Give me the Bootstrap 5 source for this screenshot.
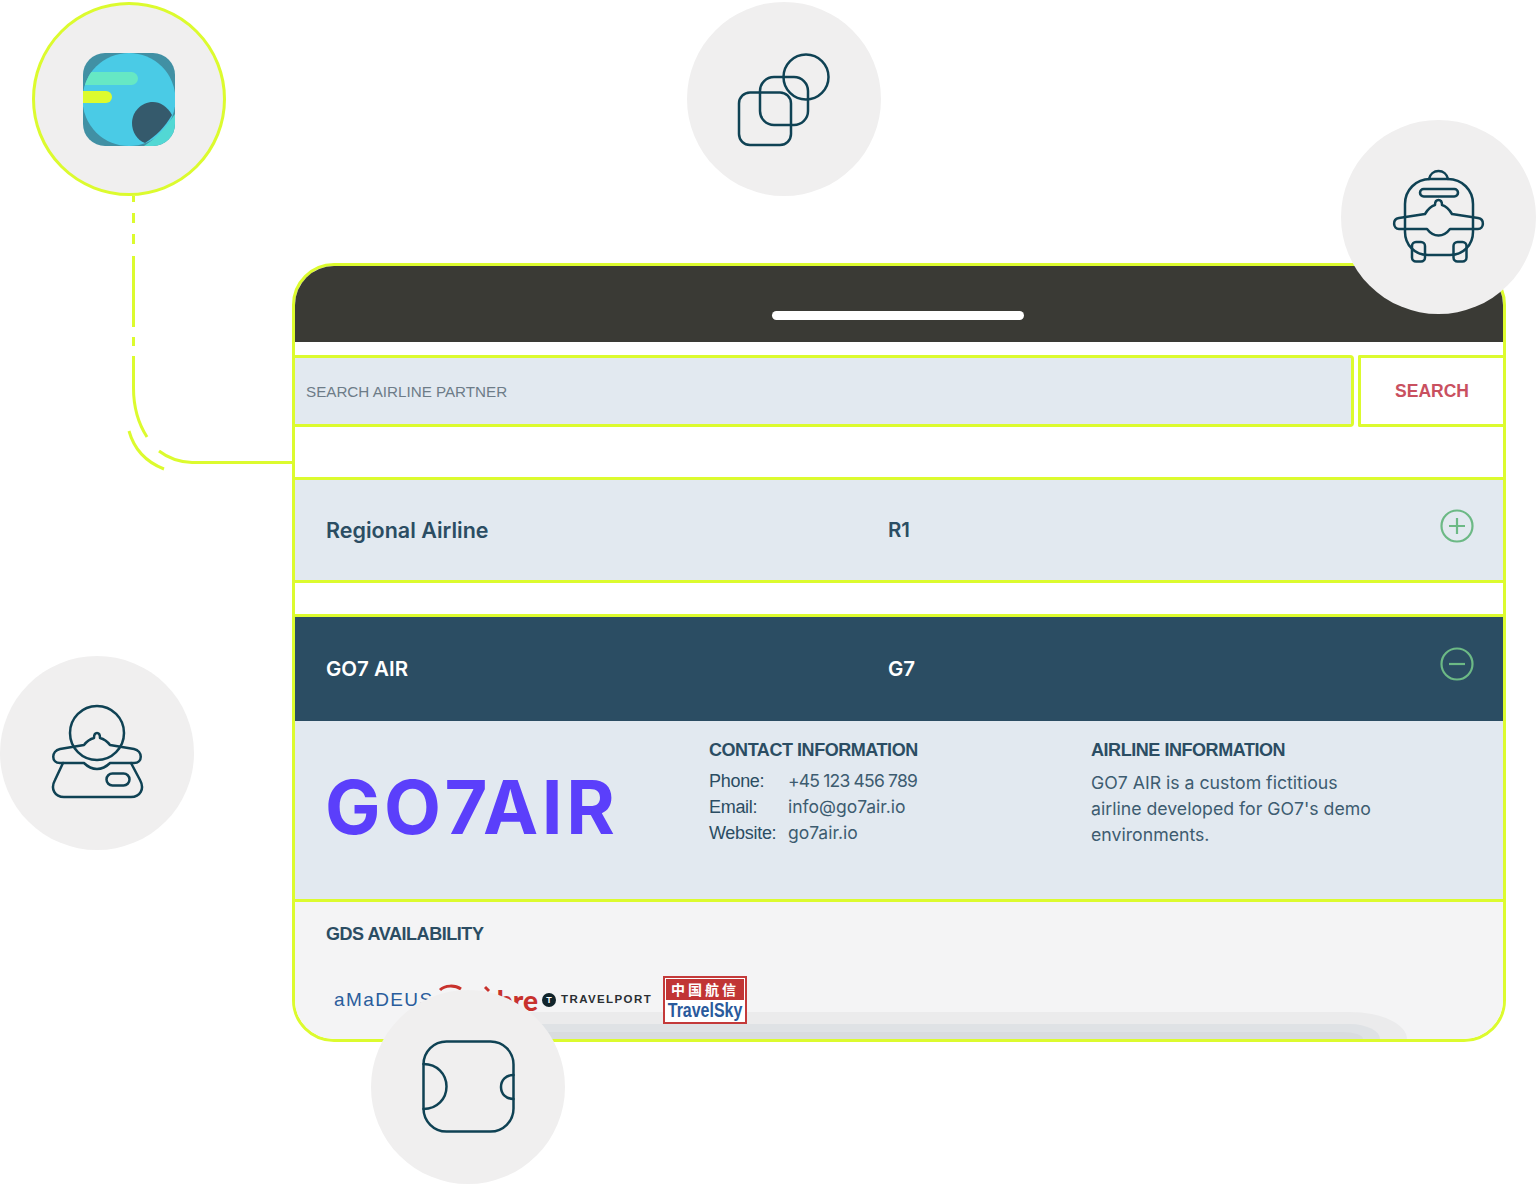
<!DOCTYPE html>
<html lang="en">
<head>
    <meta charset="UTF-8">
    <meta name="viewport" content="width=device-width, initial-scale=1.0">
    <title>GO7 airline partners</title>
    <link rel="stylesheet" href="https://cdn.jsdelivr.net/npm/bootstrap@5.3.0/dist/css/bootstrap.min.css">
    <style>
        body { background: #fff; font-family: "Liberation Sans", Arial, sans-serif; color: #2b4d63; }
        .stage { position: relative; width: 1536px; height: 1186px; overflow: hidden; padding: 263px 30px 0 292px; }
        .wire { position: absolute; left: 0; top: 0; }

        .panel-box { height: 779px; border: 3px solid #dcfb2e; border-radius: 42px; overflow: hidden; background: #fff; }
        .panel-top { height: 76px; background: #3a3a35; padding: 0 2px 22px 0; }
        .panel-grip { width: 252px; height: 9px; border-radius: 5px; background: #fff; }

        .search-line { height: 72px; margin-top: 13px; gap: 4px; }
        .search-field { height: 72px; background: #e2e9f0; border: 3px solid #dcfb2e; border-left: 0; border-radius: 0 4px 4px 0; padding: 0 0 0 11px; font-size: 15.200px; color: #6d7c88; }
        .search-field::placeholder { color: #6d7c88; }
        .search-btn { width: 145px; height: 72px; background: #fff; border: 3px solid #dcfb2e; border-right: 0; border-radius: 2px 0 0 2px; font-weight: 700; font-size: 17.500px; color: #c9505f; }

        .airline-row { background: #e2e9f0; border-top: 3px solid #dcfb2e; padding: 0 29px 0 31px; font-family: "Inter", sans-serif; font-weight: 600; }
        .airline-row.one { height: 106px; margin-top: 50px; border-bottom: 3px solid #dcfb2e; }
        .airline-row.two { height: 107px; margin-top: 31px; background: #2b4d63; color: #fff; }
        .row-name { width: 562px; font-size: 21.500px; }
        .airline-row.two .row-name { font-size: 20.500px; }
        .row-code { font-size: 20.500px; }
        .toggle-ico { margin-top: -9px; }
        .airline-row.two .toggle-ico { margin-top: -11px; }

        .detail-box { height: 181px; background: #e2e9f0; border-bottom: 3px solid #dcfb2e; padding: 18px 0 0 32px; }
        .logo-cell { width: 382px; padding-top: 26px; margin-left: -2px; margin-right: 2px; }
        .go7-logo { font-family: "Inter", sans-serif; font-weight: 700; font-size: 74px; line-height: 84px; letter-spacing: 3.500px; color: #5b3ffb; }
        .head-label { font-size: 18px; font-weight: 700; line-height: 22px; margin-bottom: 9px; letter-spacing: -.45px; }
        .contact-cell { width: 382px; font-size: 18px; line-height: 26px; }
        .contact-cell .head-label { margin-bottom: 7px; }
        .contact-cell dt { float: left; clear: left; width: 79px; font-weight: 400; letter-spacing: -.3px; }
        .contact-cell dd { margin: 0 0 0 79px; font-family: "Inter", sans-serif; font-size: 17.500px; color: #3d5c70; }
        .contact-cell dd.phone-no { letter-spacing: -.8px; }
        .about-cell { width: 285px; font-family: "Inter", sans-serif; font-size: 17.700px; line-height: 26px; color: #3d5c70; }
        .about-cell .head-label { font-family: "Liberation Sans", Arial, sans-serif; font-size: 18px; color: #2b4d63; }

        .gds-box { position: relative; height: 137px; background: #f4f4f5; padding: 21px 0 0 31px; }
        .gds-shade { position: absolute; left: 230px; right: 96px; bottom: 0; height: 27px; background: #ebebec; border-top-right-radius: 57px 27px; }
        .gds-shade.mid { right: 123px; height: 15px; background: #dfe2e5; border-top-right-radius: 30px 15px; }
        .gds-shade.low { right: 140px; height: 7px; background: #d9dcdf; border-top-right-radius: 20px 7px; }
        .gds-logos { position: relative; margin: 31px 0 0 8px; }
        .amadeus-name { width: 104px; font-size: 19px; letter-spacing: 1.400px; color: #2a5d9c; }
        .sabre-name { width: 100px; font-family: "Lato", sans-serif; font-weight: 900; font-size: 28px; color: #c8322d; line-height: 20px; text-align: right; }
        .sabre-arc { position: absolute; left: 103px; top: 8px; }
        .tp-name { font-size: 11.500px; font-weight: 700; letter-spacing: 1.400px; color: #2a2f33; }
        .tp-dot { width: 14px; height: 14px; border-radius: 50%; background: #11242b; color: #fff; font-size: 9px; font-weight: 700; line-height: 14px; text-align: center; margin: 0 5px 0 4px; }
        .sky-badge { width: 84px; height: 48px; margin-left: 11px; padding: 1px; border: 2px solid #c43a3a; background: #fff; text-align: center; overflow: hidden; }
        .sky-top { background: #c13535; color: #fff; font-family: "Noto Sans CJK SC", sans-serif; font-weight: 700; font-size: 14px; line-height: 21px; letter-spacing: 3px; }
        .sky-low { display: inline-block; margin: 0 -10px; font-weight: 700; font-size: 21px; line-height: 19px; color: #2a5a9c; white-space: nowrap; transform: scaleX(.76); }

        .node { position: absolute; width: 194px; height: 194px; border-radius: 50%; background: #f0efef; }
        .node svg { display: block; }
        .node.lime { border: 3px solid #dcfb2e; }
        .node-a { left: 32px; top: 2px; }
        .node-b { left: 687px; top: 2px; }
        .node-c { left: 1341px; top: 120px; width: 195px; }
        .node-d { left: 0; top: 656px; }
        .node-e { left: 371px; top: 990px; }
        .ln { fill: none; stroke: #0f4254; stroke-width: 2.500; stroke-linejoin: round; stroke-linecap: round; }
    </style>
</head>
<body>
    <div class="stage">
        <!-- connector from the first node into the panel -->
        <svg class="wire" width="300" height="480" viewBox="0 0 300 480" fill="none" stroke="#dcfb2e" stroke-width="3" stroke-linecap="butt">
            <path d="M133.500 196V202M133.500 213V223M133.500 234V244M133.500 256V327M133.500 337V346M133.500 356V388C133.500 405 138 423 147 437"/>
            <path d="M129 431C134 449 146 462 164 469"/>
            <path d="M159 451C168 458 180 462 192 462.500H292"/>
        </svg>

        <div class="panel-box">
            <div class="panel-top d-flex align-items-end justify-content-center">
                <div class="panel-grip"></div>
            </div>

            <div class="search-line d-flex">
                <input class="search-field flex-grow-1" type="text" placeholder="SEARCH AIRLINE PARTNER">
                <button class="search-btn" type="button">SEARCH</button>
            </div>

            <div class="airline-row one d-flex align-items-center">
                <div class="row-name">Regional Airline</div>
                <div class="row-code flex-grow-1">R1</div>
                <svg class="toggle-ico" width="34" height="34" viewBox="0 0 34 34" fill="none" stroke="#6cb985" stroke-width="2.200"><circle cx="17" cy="17" r="15.500"/><path d="M9 17H25M17 9V25"/></svg>
            </div>

            <div class="airline-row two d-flex align-items-center">
                <div class="row-name">GO7 AIR</div>
                <div class="row-code flex-grow-1">G7</div>
                <svg class="toggle-ico" width="34" height="34" viewBox="0 0 34 34" fill="none" stroke="#6cb985" stroke-width="2.200"><circle cx="17" cy="17" r="15.500"/><path d="M9 17H25"/></svg>
            </div>

            <div class="detail-box d-flex">
                <div class="logo-cell"><div class="go7-logo">GO7AIR</div></div>
                <div class="contact-cell">
                    <div class="head-label">CONTACT INFORMATION</div>
                    <dl class="mb-0">
                        <dt>Phone:</dt><dd class="phone-no">+45 123 456 789</dd>
                        <dt>Email:</dt><dd>info@go7air.io</dd>
                        <dt>Website:</dt><dd>go7air.io</dd>
                    </dl>
                </div>
                <div class="about-cell">
                    <div class="head-label">AIRLINE INFORMATION</div>
                    GO7 AIR is a custom fictitious airline developed for GO7's demo environments.
                </div>
            </div>

            <div class="gds-box">
                <div class="gds-shade"></div>
                <div class="gds-shade mid"></div>
                <div class="gds-shade low"></div>
                <div class="head-label mb-0 position-relative">GDS AVAILABILITY</div>
                <div class="gds-logos d-flex align-items-center">
                    <div class="amadeus-name">aMaDEUS</div>
                    <div class="sabre-name">sabre</div>
                    <svg class="sabre-arc" width="60" height="10" viewBox="0 0 60 10" fill="none" stroke="#c8322d" stroke-width="3"><path d="M3 6C8 1 18 1 24 5"/><path d="M48 3L52 7"/></svg>
                    <div class="tp-dot">T</div>
                    <div class="tp-name">TRAVELPORT</div>
                    <div class="sky-badge">
                        <div class="sky-top">中国航信</div>
                        <span class="sky-low">TravelSky</span>
                    </div>
                </div>
            </div>
        </div>

        <div class="node lime node-a">
            <svg width="188" height="188" viewBox="35 5 188 188">
                <defs>
                    <clipPath id="appClip"><rect x="83" y="53" width="92" height="93" rx="22"/></clipPath>
                    <clipPath id="discClip"><circle cx="129" cy="99.500" r="46.500"/></clipPath>
                </defs>
                <g clip-path="url(#appClip)">
                    <rect x="83" y="53" width="92" height="93" fill="#4190a4"/>
                    <circle cx="129" cy="99.500" r="46.500" fill="#4acbe6"/>
                    <path d="M175 114C166 127 157 138 144 146H175Z" fill="#52d8d4"/>
                    <path d="M172 115C167 106 160 102 153 102C141 102 132 112 132 123C132 132 137 140 145 143C156 136 165 127 172 115Z" fill="#355a6c"/>
                    <rect x="78" y="72" width="60" height="13" rx="6.500" fill="#66e8c4" clip-path="url(#discClip)"/>
                    <rect x="70" y="91" width="42" height="12" rx="6" fill="#dcfb2e"/>
                </g>
            </svg>
        </div>

        <div class="node node-b">
            <svg width="194" height="194" viewBox="687 2 194 194" class="ln">
                <rect x="739" y="92.500" width="52" height="52.500" rx="11"/>
                <rect x="760" y="77" width="48" height="48" rx="14"/>
                <circle cx="806" cy="77" r="22.500"/>
            </svg>
        </div>

        <div class="node node-c">
            <svg width="195" height="194" viewBox="1341 120 195 194" class="ln">
                <path d="M1429 179H1448C1462 179 1473 190 1473 204V232C1473 245 1463 255 1450 255H1428C1415 255 1405 245 1405 232V204C1405 190 1416 179 1430 179"/>
                <path d="M1429 179C1430 174 1434 171 1438.500 171C1443 171 1447 174 1448 179"/>
                <rect x="1420" y="189" width="38" height="7.500" rx="3.700"/>
                <path d="M1438.500 200C1436 200 1435 202 1435 205C1431 206 1428 209 1425 214L1399 218C1392 219 1393 229 1399 229H1427C1430 233 1434 235.500 1438.500 235.500C1443 235.500 1447 233 1450 229H1478C1484 229 1485 219 1478 218L1452 214C1449 209 1446 206 1442 205C1442 202 1441 200 1438.500 200Z"/>
                <rect x="1412" y="242" width="13" height="19.500" rx="4"/>
                <rect x="1453.500" y="242" width="13" height="19.500" rx="4"/>
            </svg>
        </div>

        <div class="node node-d">
            <svg width="194" height="194" viewBox="0 656 194 194" class="ln">
                <circle cx="97" cy="733" r="27"/>
                <path d="M97 733C95 733 94 735 94 738C90 739 87 741 84 745L60 749C51 751 51 763 60 763H84C88 767 92 769 97 769C102 769 106 767 110 763H134C143 763 143 751 134 749L110 745C107 741 104 739 100 738C100 735 99 733 97 733Z"/>
                <path d="M63 763L55 780C50 789 55 797 64 797H131C140 797 145 789 140 780L131 763"/>
                <rect x="106.500" y="773.500" width="23" height="12" rx="6"/>
            </svg>
        </div>

        <div class="node node-e">
            <svg width="194" height="194" viewBox="371 990 194 194" class="ln">
                <rect x="423.500" y="1041.500" width="90" height="90" rx="23"/>
                <path d="M423.500 1064C437 1064 446.500 1074 446.500 1086.500C446.500 1099 437 1109 423.500 1109"/>
                <path d="M513.500 1075C506 1075 501 1080 501 1087C501 1094 506 1099 513.500 1099"/>
            </svg>
        </div>
    </div>

    <script src="https://cdn.jsdelivr.net/npm/bootstrap@5.3.0/dist/js/bootstrap.bundle.min.js"></script>
</body>
</html>
